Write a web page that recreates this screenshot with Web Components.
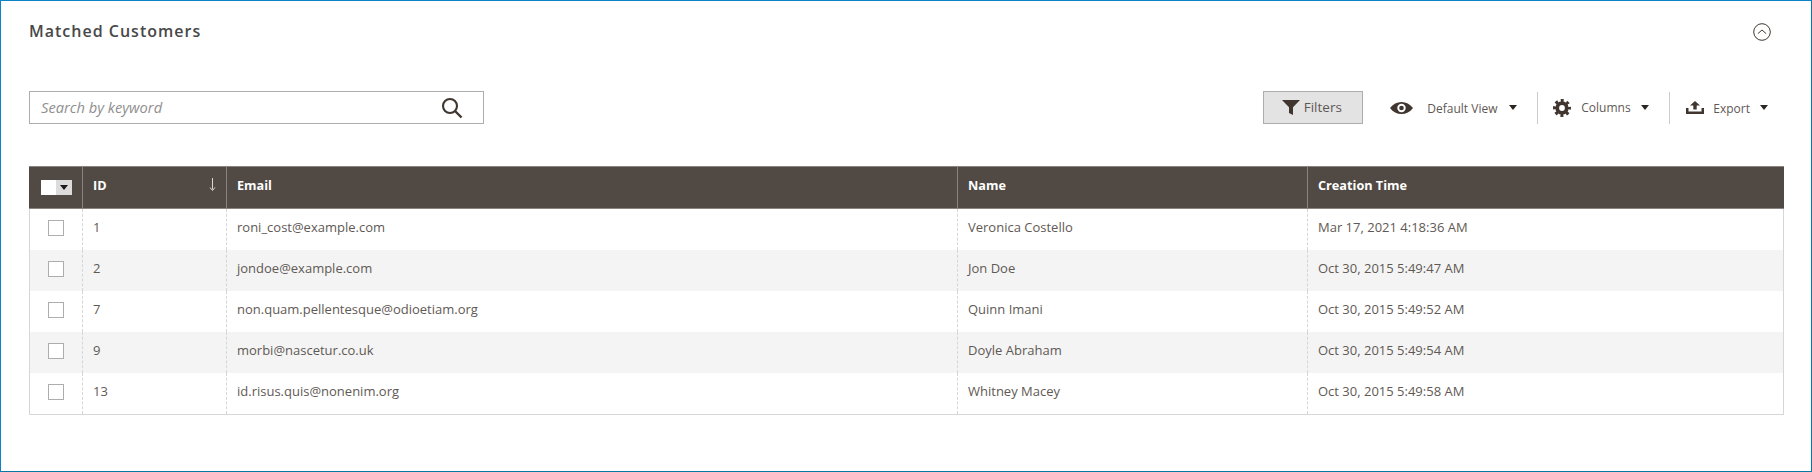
<!DOCTYPE html>
<html>
<head>
<meta charset="utf-8">
<title>Matched Customers</title>
<style>
html, body { margin: 0; padding: 0; background: #fff; height: 472px; overflow: hidden; }
body { font-family: "Open Sans", sans-serif; color: #41362f; }
</style>
</head>
<body>
<admin-panel>
    <panel-header slot="header">Matched Customers</panel-header>
    <grid-toolbar slot="toolbar"></grid-toolbar>
    <data-grid slot="grid">
        <grid-row record-id="1" email="roni_cost@example.com" name="Veronica Costello" created="Mar 17, 2021 4:18:36 AM"></grid-row>
        <grid-row record-id="2" email="jondoe@example.com" name="Jon Doe" created="Oct 30, 2015 5:49:47 AM" striped></grid-row>
        <grid-row record-id="7" email="non.quam.pellentesque@odioetiam.org" name="Quinn Imani" created="Oct 30, 2015 5:49:52 AM"></grid-row>
        <grid-row record-id="9" email="morbi@nascetur.co.uk" name="Doyle Abraham" created="Oct 30, 2015 5:49:54 AM" striped></grid-row>
        <grid-row record-id="13" email="id.risus.quis@nonenim.org" name="Whitney Macey" created="Oct 30, 2015 5:49:58 AM"></grid-row>
    </data-grid>
</admin-panel>

<script>
class AdminPanel extends HTMLElement{
    constructor(){
        super();
        this.attachShadow({mode:"open"}).innerHTML = `
        <style>
        :host {
            display: block;
            box-sizing: border-box;
            width: 1812px;
            height: 472px;
            border: 1px solid;
            border-color: #0a84c6 #0a76a3 #0a76a3 #0a84c6;
            padding: 0 28px 0 28px;
            overflow: hidden;
        }
        </style>
        <slot name="header"></slot>
        <slot name="toolbar"></slot>
        <slot name="grid"></slot>`;
    }
}

class PanelHeader extends HTMLElement{
    constructor(){
        super();
        this.attachShadow({mode:"open"}).innerHTML = `
        <style>
        :host {
            display: flex;
            align-items: center;
            justify-content: space-between;
            height: 62px;
        }
        h2 {
            margin: 0 0 2px;
            font: 600 16px/22px "Open Sans", sans-serif;
            letter-spacing: 1px;
            color: #484848;
        }
        svg { display: block; margin-right: 12px; }
        </style>
        <h2><slot></slot></h2>
        <svg width="18" height="18" viewBox="0 0 18 18" fill="none" stroke="#41362f">
            <circle cx="9" cy="9" r="8.3"/>
            <path d="M4.9 10.6 9 7l4.1 3.6"/>
        </svg>`;
    }
}

class GridToolbar extends HTMLElement{
    constructor(){
        super();
        this.attachShadow({mode:"open"}).innerHTML = `
        <style>
        :host {
            display: flex;
            align-items: center;
            height: 33px;
            margin-top: 28px;
            padding-right: 15px;
            color: #5f5955;
            font: 12px/16px "Open Sans", sans-serif;
        }
        .search {
            box-sizing: border-box;
            display: flex;
            align-items: center;
            justify-content: space-between;
            width: 455px;
            height: 33px;
            border: 1px solid #adadad;
            padding: 0 20px 0 11px;
        }
        .search span {
            font: italic 14.7px/20px "Open Sans", sans-serif;
            color: #8f8f8f;
            margin-bottom: 2px;
        }
        .spacer { flex: 1; }
        .filters {
            box-sizing: border-box;
            display: flex;
            align-items: center;
            justify-content: center;
            gap: 4px;
            width: 100px;
            height: 33px;
            padding-right: 3px;
            background: #e3e3e3;
            border: 1px solid #adadad;
            font-size: 13.500px;
        }
        .filters span { margin-bottom: 2px; }
        .action {
            display: flex;
            align-items: center;
            height: 33px;
        }
        .view { margin-left: 27px; width: 147px; }
        .columns { width: 131px; }
        .export { flex: none; }
        .sep { width: 1px; height: 32px; background: #cbcbcb; }
        .arrow {
            width: 0;
            height: 0;
            border: 4px solid transparent;
            border-top: 5px solid #2c2622;
            border-bottom: 0;
        }
        .view svg { margin-right: 14px; }
        .view span { margin-top: 2px; }
        .view .arrow { margin-left: 12px; }
        .columns { padding-left: 15px; box-sizing: border-box; }
        .columns svg { margin-right: 10px; }
        .columns .arrow { margin-left: 10px; }
        .export { padding-left: 16px; }
        .export svg { margin-right: 9px; }
        .export span { margin-top: 2px; }
        .export .arrow { margin-left: 10px; }
        </style>
        <div class="search">
            <span>Search by keyword</span>
            <svg width="22" height="22" viewBox="0 0 22 22" fill="none" stroke="#41362f" stroke-width="2.1">
                <circle cx="9" cy="9" r="7"/>
                <path d="M14 14l6.5 6.5" stroke-width="2.4"/>
            </svg>
        </div>
        <div class="spacer"></div>
        <div class="filters">
            <svg width="18" height="15" viewBox="0 0 18 15" fill="#41362f"><path d="M0 0h18L11 7.200V15L7 13V7.200z"/></svg>
            <span>Filters</span>
        </div>
        <div class="action view">
            <svg width="23" height="12" viewBox="0 0 23 12">
                <path fill="#41362f" fill-rule="evenodd" d="M0 6C3 2 7 0 11.500 0S20 2 23 6C20 10 16 12 11.500 12S3 10 0 6zM11.500 1.800a4.200 4.200 0 1 0 0 8.400 4.200 4.200 0 0 0 0-8.400z"/>
                <circle cx="11.500" cy="6" r="2.300" fill="#41362f"/>
            </svg>
            <span>Default View</span>
            <i class="arrow"></i>
        </div>
        <div class="sep"></div>
        <div class="action columns">
            <svg width="18" height="18" viewBox="0 0 18 18" fill="none" stroke="#41362f">
                <circle cx="9" cy="9" r="4.800" stroke-width="3.800"/>
                <circle cx="9" cy="9" r="7.300" stroke-width="3.400" stroke-dasharray="2.867 2.867" stroke-dashoffset="1.433"/>
            </svg>
            <span>Columns</span>
            <i class="arrow"></i>
        </div>
        <div class="sep"></div>
        <div class="action export">
            <svg width="18" height="13" viewBox="0 0 18 13">
                <path fill="#41362f" d="M9 0l5 4.500H10.700V8.500H7.300V4.500H4zM0 7h2.500v3.500H15.500V7H18V13H0z"/>
            </svg>
            <span>Export</span>
            <i class="arrow"></i>
        </div>`;
    }
}

class DataGrid extends HTMLElement{
    constructor(){
        super();
        this.attachShadow({mode:"open"}).innerHTML = `
        <style>
        :host {
            display: block;
            margin-top: 42px;
            width: 1755px;
        }
        .head {
            display: grid;
            grid-template-columns: 53px 144px 731px 350px 1fr;
            height: 43px;
            box-sizing: border-box;
            background: #514943;
            border-top: 1px solid #8a837f;
            border-bottom: 1px solid #8a837f;
            color: #fff;
            font: 700 12.7px/18px "Open Sans", sans-serif;
        }
        .head > div {
            display: flex;
            align-items: center;
            justify-content: space-between;
            padding: 0 10px 6px;
            border-left: 1px solid #8a837f;
            box-sizing: border-box;
        }
        .head > div:first-child { border-left: 0; padding: 0 0 0 12px; justify-content: flex-start; }
        .picker { display: flex; width: 31px; height: 15px; margin-top: -1px; }
        .picker b { width: 15px; background: #fff; }
        .picker i {
            display: flex;
            align-items: center;
            justify-content: center;
            flex: 1;
            background: #dcdcdc;
        }
        .picker i::after {
            content: "";
            border: 4px solid transparent;
            border-top: 5px solid #1f1a17;
            border-bottom: 0;
        }
        .body {
            border: solid #d6d6d6;
            border-width: 0 1px 1px 1px;
        }
        svg { display: block; }
        </style>
        <div class="head">
            <div><span class="picker"><b></b><i></i></span></div>
            <div>ID
                <svg width="7" height="13" viewBox="0 0 7 13" fill="none" stroke="#d9d6d4">
                    <path d="M3.500 0v11.500M1 9.500l2.500 3 2.500-3"/>
                </svg>
            </div>
            <div>Email</div>
            <div>Name</div>
            <div>Creation Time</div>
        </div>
        <div class="body"><slot></slot></div>`;
    }
}

class GridRow extends HTMLElement{
    constructor(){
        super();
        this.attachShadow({mode:"open"});
    }

    connectedCallback(){
        this.render();
    }

    render(){
        this.shadowRoot.innerHTML = `
        <style>
        :host {
            display: grid;
            grid-template-columns: 52px 144px 731px 350px 1fr;
            height: 41px;
            color: #5f5955;
            font: 13px/18px "Open Sans", sans-serif;
            background: #fff;
        }
        :host([striped]) { background: #f4f4f4; }
        div {
            display: flex;
            align-items: center;
            padding: 0 10px 5px;
            box-sizing: border-box;
            border-left: 1px dashed #d6d6d6;
        }
        div:first-of-type { border-left: 0; padding: 0 0 3px 18px; }
        i {
            box-sizing: border-box;
            width: 16px;
            height: 16px;
            background: #fff;
            border: 1px solid #adadad;
        }
        </style>
        <div><i></i></div>
        <div>${this.getAttribute("record-id")}</div>
        <div>${this.getAttribute("email")}</div>
        <div>${this.getAttribute("name")}</div>
        <div>${this.getAttribute("created")}</div>`;
    }
}

customElements.define("admin-panel", AdminPanel);
customElements.define("panel-header", PanelHeader);
customElements.define("grid-toolbar", GridToolbar);
customElements.define("data-grid", DataGrid);
customElements.define("grid-row", GridRow);
</script>
</body>
</html>
